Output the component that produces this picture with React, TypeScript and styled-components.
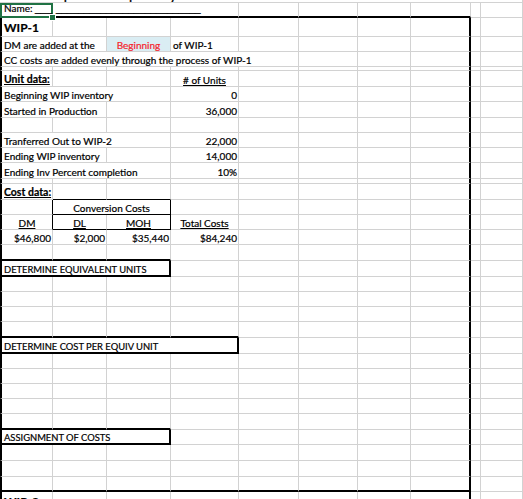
import React from "react";
import styled, { createGlobalStyle } from "styled-components";

type Edge = "none" | "grid" | "thin" | "thick" | "green";
type Align = "left" | "center" | "right";

const GlobalStyle = createGlobalStyle`
  html, body { margin: 0; padding: 0; background: #ffffff; }
  #root { width: 523px; }
`;

const EDGE_CSS: Record<Edge, string> = {
  none: "0",
  grid: "1px solid #d2d2d2",
  thin: "1px solid #000000",
  thick: "2px solid #000000",
  green: "2px solid #1f7244",
};
const EDGE_RANK: Record<Edge, number> = { none: 0, grid: 1, green: 2, thin: 3, thick: 4 };

const HEIGHTS = [
  15, 15, 19, 15, 15, 4, 16, 15, 16, 15, 15, 15, 16, 5, 16, 15, 15, 15, 16, 16, 15, 15, 15, 16, 16, 15,
  15, 15, 15, 16, 15, 16, 16, 15, 19, 20,
];
const COLS = 10;

const Viewport = styled.div`
  width: 523px;
  height: 499px;
  overflow: hidden;
  background: #ffffff;
`;

const Sheet = styled.div<{ $rows: string }>`
  display: grid;
  grid-template-columns: 53px 54px 64px 68px 60px 59px 53px 60px 10px 1fr;
  grid-template-rows: ${(p) => p.$rows};
  margin-top: -12px;
  font-family: Lato, "Open Sans", sans-serif;
  font-size: 10px;
  color: #000000;
`;

const Cell = styled.div<{
  $span: number;
  $top: Edge;
  $right: Edge;
  $bottom: Edge;
  $left: Edge;
  $align: Align;
  $fill?: string;
  $indent?: number;
  $lift?: number;
}>`
  grid-column: span ${(p) => p.$span};
  box-sizing: border-box;
  min-width: 0;
  display: flex;
  align-items: flex-end;
  justify-content: ${(p) =>
    p.$align === "left" ? "flex-start" : p.$align === "center" ? "center" : "flex-end"};
  padding: 0 ${(p) => (p.$align === "right" ? "1px" : "2px")} ${(p) => p.$lift ?? 0}px
    ${(p) => p.$indent ?? 2}px;
  border-top: ${(p) => EDGE_CSS[p.$top]};
  border-right: ${(p) => EDGE_CSS[p.$right]};
  border-bottom: ${(p) => EDGE_CSS[p.$bottom]};
  border-left: ${(p) => EDGE_CSS[p.$left]};
  background: ${(p) => p.$fill ?? "transparent"};
  overflow: hidden;
  white-space: nowrap;
`;

const SelectedCell = styled(Cell)`
  position: relative;
  overflow: visible;
  &::after {
    content: "";
    position: absolute;
    right: -5px;
    bottom: -5px;
    width: 5px;
    height: 5px;
    background: #1f7244;
    border: 1px solid #ffffff;
    z-index: 2;
  }
`;

const Label = styled.span<{ $bold?: boolean; $underline?: boolean; $size?: number; $color?: string }>`
  font-weight: ${(p) => (p.$bold ? 700 : 400)};
  font-size: ${(p) => (p.$size ? `${p.$size}px` : "inherit")};
  color: ${(p) => p.$color ?? "inherit"};
  line-height: 1.2;
  -webkit-text-stroke: 0.2px currentColor;
  text-decoration: ${(p) => (p.$underline ? "underline" : "none")};
  text-decoration-thickness: 1px;
  text-underline-offset: 1px;
`;

const Blank = styled.span`
  font-family: "Liberation Sans", Arial, sans-serif;
  font-size: 10px;
  line-height: 1.2;
`;

type Spec = {
  c: number;
  span?: number;
  text?: React.ReactNode;
  align?: Align;
  bold?: boolean;
  underline?: boolean;
  size?: number;
  color?: string;
  fill?: string;
  selected?: boolean;
  indent?: number;
  lift?: number;
};

const HEADING = 9.4;
const SECTION = 10.5;

const ROWS: Record<number, Spec[]> = {
  0: [{ c: 0, span: 10, text: "Chapter 4 \u2013 Group Activity", bold: true, size: 11, indent: 45 }],
  1: [
    {
      c: 0,
      selected: true,
      lift: 1,
      text: (
        <>
          Name: <Blank>___</Blank>
        </>
      ),
    },
    { c: 1, span: 3, lift: 1, indent: 3, text: <Blank>{"_".repeat(26)}</Blank> },
  ],
  2: [{ c: 0, text: "WIP-1", bold: true, size: 12, lift: 1 }],
  3: [
    { c: 0, span: 2, text: "DM are added at the" },
    { c: 2, text: "Beginning", align: "center", color: "#f5232b", fill: "#daedf3" },
    { c: 3, text: "of WIP-1" },
  ],
  4: [{ c: 0, span: 5, text: "CC costs are added evenly through the process of WIP-1" }],
  6: [
    { c: 0, text: "Unit data:", bold: true, underline: true, size: SECTION },
    { c: 3, text: "# of Units", align: "center", underline: true },
  ],
  7: [
    { c: 0, span: 3, text: "Beginning WIP inventory" },
    { c: 3, text: "0", align: "right" },
  ],
  8: [
    { c: 0, span: 2, text: "Started in Production" },
    { c: 3, text: "36,000", align: "right" },
  ],
  10: [
    { c: 0, span: 3, text: "Tranferred Out to WIP-2" },
    { c: 3, text: "22,000", align: "right" },
  ],
  11: [
    { c: 0, span: 2, text: "Ending WIP inventory" },
    { c: 3, text: "14,000", align: "right" },
  ],
  12: [
    { c: 0, span: 3, text: "Ending Inv Percent completion" },
    { c: 3, text: "10%", align: "right" },
  ],
  14: [{ c: 0, text: "Cost data:", bold: true, underline: true, size: SECTION }],
  15: [{ c: 1, span: 2, text: "Conversion Costs", align: "center" }],
  16: [
    { c: 0, text: "DM", align: "center", underline: true },
    { c: 1, text: "DL", align: "center", underline: true },
    { c: 2, text: "MOH", align: "center", underline: true },
    { c: 3, text: "Total Costs", align: "center", underline: true },
  ],
  17: [
    { c: 0, text: "$46,800", align: "right" },
    { c: 1, text: "$2,000", align: "right" },
    { c: 2, text: "$35,440", align: "right" },
    { c: 3, text: "$84,240", align: "right" },
  ],
  19: [{ c: 0, span: 3, text: "DETERMINE EQUIVALENT UNITS", size: HEADING }],
  24: [{ c: 0, span: 4, text: "DETERMINE COST PER EQUIV UNIT", size: HEADING }],
  30: [{ c: 0, span: 3, text: "ASSIGNMENT OF COSTS", size: HEADING }],
  34: [{ c: 0, text: "WIP-2", bold: true, size: 12, lift: 1 }],
};

type Box = { r0: number; r1: number; c0: number; c1: number; e: Edge };
const BOXES: Box[] = [
  { r0: 2, r1: 33, c0: 0, c1: 7, e: "thick" },
  { r0: 34, r1: 60, c0: 0, c1: 7, e: "thick" },
  { r0: 15, r1: 15, c0: 1, c1: 2, e: "thin" },
  { r0: 16, r1: 16, c0: 1, c1: 2, e: "thin" },
  { r0: 19, r1: 19, c0: 0, c1: 2, e: "thick" },
  { r0: 24, r1: 24, c0: 0, c1: 3, e: "thick" },
  { r0: 30, r1: 30, c0: 0, c1: 2, e: "thick" },
];

const stronger = (a: Edge, b: Edge): Edge => (EDGE_RANK[b] > EDGE_RANK[a] ? b : a);

// boundary under row r at column c
const bottomEdge = (r: number, c: number): Edge =>
  BOXES.reduce<Edge>(
    (acc, b) => (c >= b.c0 && c <= b.c1 && (r === b.r0 - 1 || r === b.r1) ? stronger(acc, b.e) : acc),
    "grid"
  );

// boundary right of column c at row r
const rightEdge = (r: number, c: number): Edge =>
  BOXES.reduce<Edge>(
    (acc, b) => (r >= b.r0 && r <= b.r1 && (c === b.c0 - 1 || c === b.c1) ? stronger(acc, b.e) : acc),
    "grid"
  );

const leftEdge = (r: number): Edge =>
  BOXES.reduce<Edge>((acc, b) => (b.c0 === 0 && r >= b.r0 && r <= b.r1 ? stronger(acc, b.e) : acc), "none");

function renderRow(r: number) {
  const specs = ROWS[r] ?? [];
  const out: React.ReactNode[] = [];
  let c = 0;
  while (c < COLS) {
    const spec = specs.find((s) => s.c === c) ?? { c };
    const span = spec.span ?? 1;
    const last = c + span - 1;
    const key = `${r}-${c}`;
    const content = spec.text ? (
      <Label $bold={spec.bold} $underline={spec.underline} $size={spec.size} $color={spec.color}>
        {spec.text}
      </Label>
    ) : null;
    if (spec.selected) {
      out.push(
        <SelectedCell
          key={key}
          $span={span}
          $top="green"
          $right="green"
          $bottom="green"
          $left="green"
          $align={spec.align ?? "left"}
          $lift={spec.lift}
        >
          {content}
        </SelectedCell>
      );
    } else {
      out.push(
        <Cell
          key={key}
          $span={span}
          $top="none"
          $right={rightEdge(r, last)}
          $bottom={bottomEdge(r, c)}
          $left={c === 0 ? leftEdge(r) : "none"}
          $align={spec.align ?? "left"}
          $fill={spec.fill}
          $indent={spec.indent}
          $lift={spec.lift}
        >
          {content}
        </Cell>
      );
    }
    c += span;
  }
  return out;
}

export default function App() {
  return (
    <>
      <GlobalStyle />
      <Viewport>
        <Sheet $rows={HEIGHTS.map((h) => `${h}px`).join(" ")}>{HEIGHTS.map((_, r) => renderRow(r))}</Sheet>
      </Viewport>
    </>
  );
}
